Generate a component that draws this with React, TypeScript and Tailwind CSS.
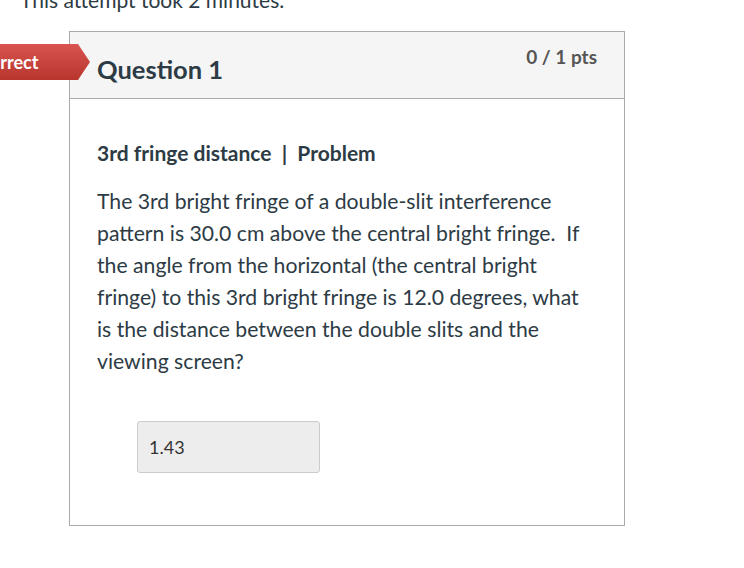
import React from 'react';

const lato = { fontFamily: 'Lato, "Open Sans", sans-serif' };

export default function App() {
  return (
    <div className="w-[744px] h-[568px] overflow-hidden bg-white text-[#2d3b45]" style={lato}>
      {/* attempt note, scrolled mostly out of view */}
      <p className="-mt-[12px] ml-[20px] text-[21px] leading-[24px] text-[#2d3b45]">This attempt took 2 minutes.</p>

      <div className="relative ml-[69px] mt-[19px] w-[556px] h-[495px] border border-[#aaaaaa]">
        {/* result banner */}
        <div
          className="absolute top-[12px] -left-[110px] w-[130px] h-[36px] flex items-center pl-[6px] text-white font-bold text-[18px] bg-gradient-to-b from-[#d9534f] to-[#b8352e] [clip-path:polygon(0_0,calc(100%-12px)_0,100%_50%,calc(100%-12px)_100%,0_100%)]"
        >
          Incorrect
        </div>

        <div className="h-[67px] bg-[#f5f5f5] border-b border-[#aaaaaa] flex justify-between pl-[27px] pr-[27px]">
          <h2 className="mt-[22px] text-[25.5px] leading-[30px] font-bold">Question 1</h2>
          <span className="mt-[13px] text-[19px] leading-[24px] font-bold text-[#555555]">0 / 1 pts</span>
        </div>

        <div className="pl-[27px] pr-[20px] pt-[40px]">
          <p className="text-[21px] leading-[28px] font-bold">3rd fringe distance&nbsp; |&nbsp; Problem</p>
          <p className="mt-[18px] text-[21.2px] leading-[32px] max-w-[495px]">
            The 3rd bright fringe of a double-slit interference pattern is 30.0 cm above the central bright fringe.&nbsp; If the angle from the horizontal (the central bright fringe) to this 3rd bright fringe is 12.0 degrees, what is the distance between the double slits and the viewing screen?
          </p>
          <div className="mt-[44px] ml-[40px] w-[183px] h-[52px] rounded-[3px] border border-[#cccccc] bg-[#ededed] flex items-center px-[11px] text-[18px] text-[#333333]">
            1.43
          </div>
        </div>
      </div>
    </div>
  );
}
